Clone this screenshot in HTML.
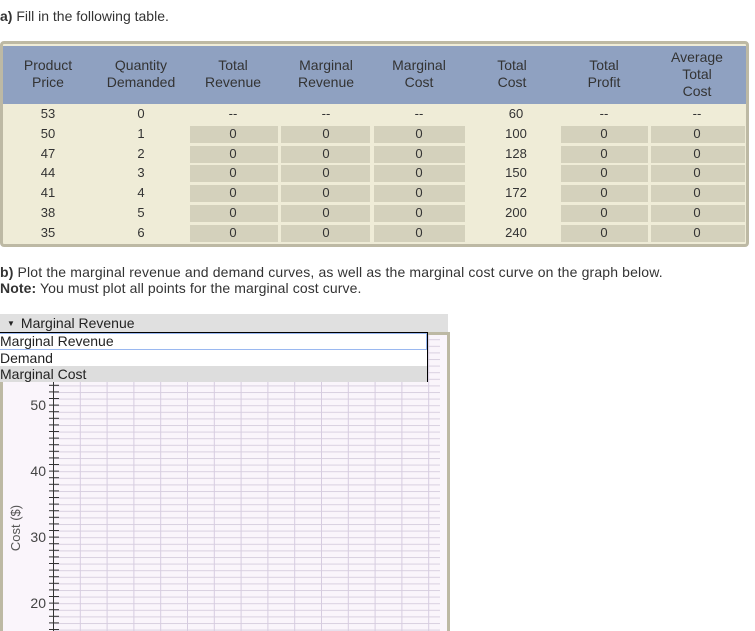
<!DOCTYPE html>
<html><head><style>
body{margin:0;width:755px;height:631px;overflow:hidden;background:#fff;font-family:"Liberation Sans",sans-serif;color:#333;position:relative}
.t{position:absolute;font-size:14px;white-space:nowrap}
.frame{position:absolute;left:0;top:41px;width:743px;height:200px;border:3px solid #bdb9a4;border-radius:4px;background:#efecd7}
.hdr{position:absolute;left:0;top:2px;width:743px;height:58px;background:#8fa1c1}
.h{position:absolute;font-size:14px;text-align:center;color:#333;line-height:17px}
.c{position:absolute;font-size:13px;text-align:center;height:17px;line-height:17px}
.in{background:#d4d1bc}
</style></head><body>
<div class="t" style="left:0;top:8px"><b>a)</b> Fill in the following table.</div>
<div class="frame">
<div class="hdr"></div>
</div>
<div id="tbl"></div>
<div class="t" style="left:0;top:264px;letter-spacing:0.15px"><b>b)</b> Plot the marginal revenue and demand curves, as well as the marginal cost curve on the graph below.</div>
<div class="t" style="left:0;top:280px;letter-spacing:0.1px"><b>Note:</b> You must plot all points for the marginal cost curve.</div>

<div style="position:absolute;left:0;top:314px;width:448px;height:18px;background:#e0e0e0;font-size:14px;line-height:18px;color:#222"><span style="font-size:8px;margin:0 6px 0 7px;vertical-align:2px">▼</span>Marginal Revenue</div>

<svg style="position:absolute;left:0;top:332px" width="450" height="299">
<defs>
<pattern id="hg" width="10" height="6.6" patternUnits="userSpaceOnUse" patternTransform="translate(0,0.6)">
<rect width="10" height="1" fill="#d9d0e0"/></pattern>
<pattern id="vg" width="26.8" height="10" patternUnits="userSpaceOnUse" patternTransform="translate(53,0)">
<rect width="1" height="10" fill="#d6cce0"/></pattern>
</defs>
<rect x="0" y="0" width="450" height="299" fill="#bdb9a4"/>
<rect x="3" y="3" width="444" height="296" fill="#faf5fb"/>
<rect x="54" y="3" width="386" height="296" fill="url(#hg)"/>
<rect x="54" y="3" width="386" height="296" fill="url(#vg)"/>
<rect x="53" y="3" width="1" height="296" fill="#333"/>
<g id="ticks"></g>
<text x="46" y="78" font-size="14" text-anchor="end" fill="#444" font-family="Liberation Sans">50</text>
<text x="46" y="144" font-size="14" text-anchor="end" fill="#444" font-family="Liberation Sans">40</text>
<text x="46" y="210" font-size="14" text-anchor="end" fill="#444" font-family="Liberation Sans">30</text>
<text x="46" y="276" font-size="14" text-anchor="end" fill="#444" font-family="Liberation Sans">20</text>
<text transform="translate(20,196) rotate(-90)" font-size="13" text-anchor="middle" fill="#555" font-family="Liberation Sans">Cost ($)</text>
</svg>

<div style="position:absolute;left:0;top:332px;width:427px;height:48px;border:1px solid #000;border-left:none;background:#fff;font-size:14px;color:#222;line-height:16px">
<div style="height:15px;border:1px solid #9ab8f0;border-left:none;line-height:15px">Marginal Revenue</div>
<div>Demand</div>
<div style="background:#ddd">Marginal Cost</div>
</div>

<script>
var cols=[[48,0,0],[141,0,0],[233,190,88],[326,281,89],[419,374,91],[512,0,0],[604,561,87],[697,651,94]];
var heads=[["Product","Price"],["Quantity","Demanded"],["Total","Revenue"],["Marginal","Revenue"],["Marginal","Cost"],["Total","Cost"],["Total","Profit"],["Average","Total","Cost"]];
var price=[53,50,47,44,41,38,35],tc=[60,100,128,150,172,200,240];
var h='';
heads.forEach(function(hd,i){var top=hd.length==3?49:57;h+='<div class="h" style="left:'+(cols[i][0]-50)+'px;width:100px;top:'+top+'px">'+hd.join('<br>')+'</div>';});
for(var r=0;r<7;r++){var y=105+r*19.8;
 var vals=[price[r],r,r?0:'--',r?0:'--',r?0:'--',tc[r],r?0:'--',r?0:'--'];
 for(var i=0;i<8;i++){
  if(r>0&&cols[i][1]){h+='<div class="c in" style="left:'+cols[i][1]+'px;width:'+cols[i][2]+'px;top:'+(y+1)+'px"></div>';}
  h+='<div class="c" style="left:'+(cols[i][0]-40+(i==5?4:0))+'px;width:80px;top:'+(y)+'px">'+vals[i]+'</div>';
 }}
document.getElementById('tbl').innerHTML=h;
var t='';for(var y=6.6;y<299;y+=6.6){t+='<rect x="49" y="'+y.toFixed(1)+'" width="10" height="1" fill="#333"/>';}
document.getElementById('ticks').innerHTML=t;
</script>
</body></html>
